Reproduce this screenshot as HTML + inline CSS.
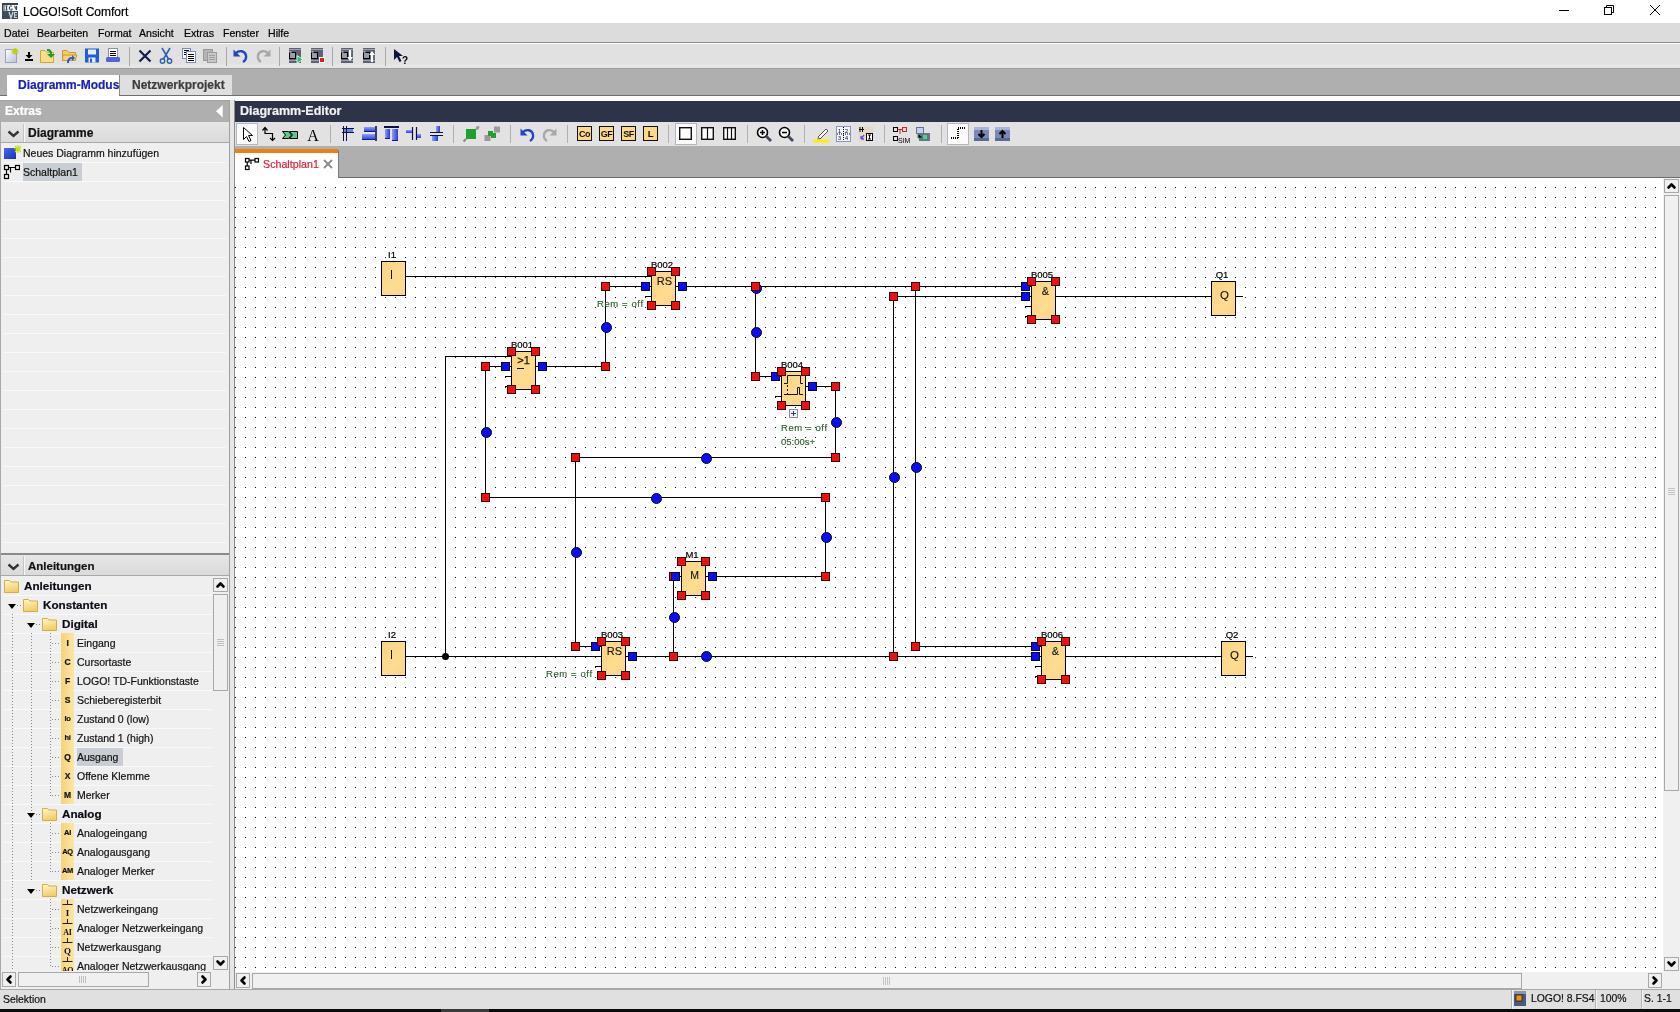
<!DOCTYPE html>
<html><head><meta charset="utf-8"><title>LOGO!Soft Comfort</title>
<style>
#root{position:absolute;left:0;top:0;width:1680px;height:1012px;overflow:hidden;will-change:transform}
html,body{margin:0;padding:0;width:1680px;height:1012px;overflow:hidden;background:#fff;position:relative}
body{font-family:"Liberation Sans",sans-serif;-webkit-font-smoothing:antialiased}
.t{position:absolute;white-space:nowrap;line-height:1;font-family:"Liberation Sans",sans-serif;-webkit-text-stroke:0.2px currentColor}
svg{overflow:hidden}
</style></head><body><div id="root">
<div style="position:absolute;left:0;top:0;width:1680px;height:23px;background:#fff"></div>
<svg style="position:absolute;left:2px;top:3px" width="16" height="16" viewBox="0 0 16 16">
<rect x="0" y="0" width="16" height="16" fill="#34414c"/>
<rect x="1" y="2" width="15" height="6" fill="#f4f6f8"/>
<path d="M2 2 V8 M4.5 3 V7 M3.5 3 H5.5 M3.5 7 H5.5 M8 3 H10 M7.5 3.5 V6.5 M8 7 H10 M10 5.5 V7 M12.5 3 L14.5 7 M14.5 3 V7" stroke="#34414c" stroke-width="1.1" fill="none"/>
<rect x="0" y="8" width="16" height="8" fill="#3e4c58"/>
<path d="M7 9 L9 15 L11 9" stroke="#c8d4de" stroke-width="1.3" fill="none"/>
<path d="M12 9.5 H15 M12 12 H15 M12 14.5 H15 M12.5 9 V15" stroke="#c8d4de" stroke-width="1.1"/>
</svg>
<div class="t" style="left:23px;top:6px;font-size:12px;color:#000">LOGO!Soft Comfort</div>
<svg style="position:absolute;left:1540px;top:0" width="140" height="23">
<line x1="19" y1="10.5" x2="29" y2="10.5" stroke="#000" stroke-width="1"/>
<rect x="64.5" y="7.5" width="7" height="7" fill="none" stroke="#000"/>
<path d="M66.5 7.5 V5.5 H73.5 V12.5 H71.5" fill="none" stroke="#000"/>
<path d="M110 5 L120 15 M120 5 L110 15" stroke="#000" stroke-width="1"/>
</svg>
<div style="position:absolute;left:0;top:23px;width:1680px;height:19px;background:#dcdcdc"></div>
<div style="position:absolute;left:0;top:42px;width:1680px;height:1px;background:#8c8c8c"></div>
<div style="position:absolute;left:0;top:43px;width:1680px;height:1px;background:#fdfdfd"></div>
<div class="t" style="left:4px;top:28px;font-size:10.6px;color:#000">Datei</div>
<div class="t" style="left:37px;top:28px;font-size:10.6px;color:#000">Bearbeiten</div>
<div class="t" style="left:98px;top:28px;font-size:10.6px;color:#000">Format</div>
<div class="t" style="left:139px;top:28px;font-size:10.6px;color:#000">Ansicht</div>
<div class="t" style="left:184px;top:28px;font-size:10.6px;color:#000">Extras</div>
<div class="t" style="left:223px;top:28px;font-size:10.6px;color:#000">Fenster</div>
<div class="t" style="left:268px;top:28px;font-size:10.6px;color:#000">Hilfe</div>
<div style="position:absolute;left:0;top:44px;width:1680px;height:24px;background:linear-gradient(#e1e1e1 0,#e1e1e1 20px,#e7e7e7 21px,#e5e5e5 24px)"></div>
<div style="position:absolute;left:0;top:68px;width:1680px;height:1px;background:#9c9c9c"></div>
<div style="position:absolute;left:129px;top:47px;width:1px;height:19px;background:#a8a8a8"></div>
<div style="position:absolute;left:226px;top:47px;width:1px;height:19px;background:#a8a8a8"></div>
<div style="position:absolute;left:279px;top:47px;width:1px;height:19px;background:#a8a8a8"></div>
<div style="position:absolute;left:332px;top:47px;width:1px;height:19px;background:#a8a8a8"></div>
<div style="position:absolute;left:385px;top:47px;width:1px;height:19px;background:#a8a8a8"></div>
<svg style="position:absolute;left:4px;top:47px" width="17" height="17" viewBox="0 0 17 17">
<defs><linearGradient id="nd" x1="0" y1="0" x2="1" y2="1"><stop offset="0" stop-color="#fff"/><stop offset="1" stop-color="#b8bde8"/></linearGradient></defs>
<rect x="1.5" y="2.5" width="11" height="13" fill="url(#nd)" stroke="#9aa0c8"/>
<path d="M11 1 V8 M7.5 4.5 H14.5 M8.5 2 L13.5 7 M13.5 2 L8.5 7" stroke="#b9d400" stroke-width="1.3"/>
</svg>
<svg style="position:absolute;left:22px;top:47px" width="14" height="17" viewBox="0 0 14 17">
<path d="M7 5 V11" stroke="#000" stroke-width="2"/><path d="M3.5 8 H10.5 L7 11.5 Z" fill="#000"/>
<rect x="3" y="12" width="8" height="2" fill="#000"/>
</svg>
<svg style="position:absolute;left:39px;top:47px" width="18" height="17" viewBox="0 0 18 17">
<path d="M1.5 3.5 H6 L8 5.5 H14.5 V15.5 H1.5 Z" fill="#f7df8a" stroke="#d2a43c"/>
<path d="M8 2 C12 2 13 4 13 7 L16 7 L12 11 L8 7 L11 7 C11 5 10 4 8 4 Z" fill="#1e9a2c"/>
</svg>
<svg style="position:absolute;left:61px;top:47px" width="18" height="18" viewBox="0 0 18 18">
<path d="M1.5 3.5 H6 L8 5.5 H14.5 V13.5 H1.5 Z" fill="#f2cf6a" stroke="#c99a2e"/>
<path d="M2 8 H16 L14 13.5 H1.5 Z" fill="#f6d57a" stroke="#c99a2e"/>
<path d="M6 16 C6 12 8 10 11 10 L11 8 L14 11 L11 14 L11 12 C9 12 8 13 8 16 Z" fill="#2f53d8"/>
</svg>
<svg style="position:absolute;left:84px;top:47px" width="16" height="17" viewBox="0 0 16 17">
<rect x="1" y="1.5" width="14" height="14" fill="#1f5fd6"/>
<rect x="4" y="2.5" width="8" height="5" fill="#e8eef8"/>
<rect x="4.5" y="10.5" width="7" height="5" fill="#e8eef8"/>
<rect x="6" y="11.5" width="2" height="4" fill="#1f5fd6"/>
</svg>
<svg style="position:absolute;left:105px;top:47px" width="16" height="17" viewBox="0 0 16 17">
<rect x="3.5" y="1.5" width="9" height="9" fill="#fff" stroke="#8b90b0"/>
<path d="M5 4.5 H11 M5 6.5 H11 M5 8.5 H11" stroke="#000"/>
<rect x="1" y="10" width="14" height="5" rx="1.5" fill="#5563d8"/>
</svg>
<svg style="position:absolute;left:137px;top:48px" width="16" height="16" viewBox="0 0 16 16">
<path d="M2.5 2.5 L13.5 13.5 M13.5 2.5 L2.5 13.5" stroke="#141c4c" stroke-width="2.2"/>
</svg>
<svg style="position:absolute;left:158px;top:47px" width="16" height="17" viewBox="0 0 16 17">
<path d="M4 1 L10.5 12 M12 1 L5.5 12" stroke="#2f5fb8" stroke-width="1.6"/>
<circle cx="4.5" cy="14" r="2.2" fill="none" stroke="#2f5fb8" stroke-width="1.4"/>
<circle cx="11.5" cy="14" r="2.2" fill="none" stroke="#2f5fb8" stroke-width="1.4"/>
</svg>
<svg style="position:absolute;left:181px;top:47px" width="16" height="17" viewBox="0 0 16 17">
<rect x="1.5" y="1.5" width="8" height="10" fill="#fff" stroke="#7b88c8"/>
<rect x="5.5" y="4.5" width="9" height="11" fill="#fff" stroke="#7b88c8"/>
<path d="M3 3.5 H8 M3 5.5 H5 M3 7.5 H5 M7 7.5 H13 M7 9.5 H13 M7 11.5 H13 M7 13.5 H13" stroke="#000"/>
</svg>
<svg style="position:absolute;left:202px;top:47px" width="16" height="17" viewBox="0 0 16 17">
<rect x="1.5" y="2.5" width="9" height="11" fill="#b4b4b4" stroke="#999"/>
<rect x="5.5" y="5.5" width="9" height="10" fill="#c8c8c8" stroke="#9c9c9c"/>
<path d="M7 8.5 H13 M7 10.5 H13 M7 12.5 H13" stroke="#a0a0a0"/>
</svg>
<svg style="position:absolute;left:232px;top:47px" width="17" height="17" viewBox="0 0 17 17">
<path d="M4 6 C7 3 13 3.5 14 8.5 C14.5 11.5 12.5 14 11 15" fill="none" stroke="#2344c8" stroke-width="2.4"/>
<path d="M1.5 2.5 V9.5 H8.5 Z" fill="#2344c8"/>
</svg>
<svg style="position:absolute;left:255px;top:47px" width="17" height="17" viewBox="0 0 17 17">
<path d="M13 6 C10 3 4 3.5 3 8.5 C2.5 11.5 4.5 14 6 15" fill="none" stroke="#a8a8a8" stroke-width="2.4"/>
<path d="M15.5 2.5 V9.5 H8.5 Z" fill="#a8a8a8"/>
</svg>
<svg style="position:absolute;left:288px;top:47px" width="16" height="17" viewBox="0 0 16 17">
<rect x="1" y="1" width="12" height="15" fill="#5e6272"/>
<rect x="1" y="2" width="12" height="1" fill="#9aa0b4"/>
<rect x="1" y="13" width="12" height="1" fill="#9aa0b4"/>
<rect x="1.5" y="5.5" width="6" height="6" fill="#9a9ca8" stroke="#000"/>
<rect x="1.5" y="4.5" width="2" height="1" fill="#fff"/>
<path d="M9 8.5 L15 12.5 L9 16.5 Z" fill="#28c070" stroke="#fff" stroke-width="0.8"/>
</svg>
<svg style="position:absolute;left:310px;top:47px" width="16" height="17" viewBox="0 0 16 17">
<rect x="1" y="1" width="12" height="15" fill="#5e6272"/>
<rect x="1" y="2" width="12" height="1" fill="#9aa0b4"/>
<rect x="1" y="13" width="12" height="1" fill="#9aa0b4"/>
<rect x="1.5" y="5.5" width="6" height="6" fill="#9a9ca8" stroke="#000"/>
<rect x="1.5" y="4.5" width="2" height="1" fill="#fff"/>
<rect x="9.5" y="10.5" width="5" height="5" fill="#e81818" stroke="#fff"/>
</svg>
<svg style="position:absolute;left:340px;top:47px" width="16" height="17" viewBox="0 0 16 17">
<rect x="1" y="1" width="12" height="15" fill="#5e6272"/>
<rect x="1" y="2" width="12" height="1" fill="#9aa0b4"/>
<rect x="1" y="13" width="12" height="1" fill="#9aa0b4"/>
<rect x="1.5" y="5.5" width="6" height="6" fill="#9a9ca8" stroke="#000"/>
<rect x="1.5" y="4.5" width="2" height="1" fill="#fff"/>
<path d="M10 3 V12" stroke="#fff" stroke-width="2.2"/><path d="M7 10 H13 L10 14 Z" fill="#fff"/>
</svg>
<svg style="position:absolute;left:362px;top:47px" width="16" height="17" viewBox="0 0 16 17">
<rect x="1" y="1" width="12" height="15" fill="#5e6272"/>
<rect x="1" y="2" width="12" height="1" fill="#9aa0b4"/>
<rect x="1" y="13" width="12" height="1" fill="#9aa0b4"/>
<rect x="1.5" y="5.5" width="6" height="6" fill="#9a9ca8" stroke="#000"/>
<rect x="1.5" y="4.5" width="2" height="1" fill="#fff"/>
<path d="M10 15 V6" stroke="#fff" stroke-width="2.2"/><path d="M7 8 H13 L10 4 Z" fill="#fff"/>
</svg>
<svg style="position:absolute;left:393px;top:48px" width="16" height="16" viewBox="0 0 16 16">
<path d="M1 1 L1 12 L4 9 L6.5 14 L8.5 13 L6 8 L10 8 Z" fill="#0c1440"/>
<text x="9" y="15.5" font-family="Liberation Sans" font-weight="bold" font-size="10" fill="#000">?</text>
</svg>
<div style="position:absolute;left:0;top:69px;width:1680px;height:26px;background:#afafaf"></div>
<div style="position:absolute;left:0;top:95px;width:1680px;height:1px;background:#6e6e6e"></div>
<div style="position:absolute;left:0;top:96px;width:1680px;height:4px;background:#fff"></div>
<div style="position:absolute;left:7px;top:75px;width:112px;height:21px;background:#fff"></div>
<div class="t" style="left:18px;top:79px;font-size:12px;font-weight:bold;color:#1c22b8">Diagramm-Modus</div>
<div style="position:absolute;left:120px;top:75px;width:112px;height:20px;background:#dfdfdf"></div>
<div style="position:absolute;left:119px;top:75px;width:1px;height:20px;background:#8e8e8e"></div>
<div class="t" style="left:132px;top:79px;font-size:12px;font-weight:bold;color:#3c3c3c">Netzwerkprojekt</div>
<div style="position:absolute;left:0;top:100px;width:230px;height:889px;background:#efefef"></div>
<div style="position:absolute;left:0;top:100px;width:1px;height:889px;background:#a8a8a8"></div>
<div style="position:absolute;left:229px;top:100px;width:1px;height:889px;background:#a0a0a0"></div>
<div style="position:absolute;left:230px;top:100px;width:4px;height:889px;background:#e6e6e6"></div>
<div style="position:absolute;left:0;top:100px;width:229px;height:22px;background:#afafaf;border-top:1px solid #a2a2a2;box-sizing:border-box"></div>
<div class="t" style="left:5px;top:105px;font-size:12px;font-weight:bold;color:#fff">Extras</div>
<svg style="position:absolute;left:215px;top:104px" width="9" height="15"><path d="M1 7.3 L7.7 1 L7.7 13.6 Z" fill="#fff"/></svg>
<div style="position:absolute;left:1px;top:122px;width:228px;height:21px;background:linear-gradient(#e6e6e6,#dadada);border-bottom:1px solid #a8a8a8;box-sizing:border-box"></div>
<div style="position:absolute;left:23px;top:124px;width:1px;height:18px;background:#c4c4c4"></div>
<div style="position:absolute;left:24px;top:124px;width:1px;height:18px;background:#f8f8f8"></div>
<svg style="position:absolute;left:7px;top:130px" width="13" height="8" viewBox="0 0 13 8"><path d="M1.5 1.5 L6.5 6 L11.5 1.5" fill="none" stroke="#333" stroke-width="2.4"/></svg>
<div class="t" style="left:28px;top:127px;font-size:12px;font-weight:bold;color:#111">Diagramme</div>
<div style="position:absolute;left:4px;top:162px;width:222px;height:1px;background:#f9f9f9"></div>
<div style="position:absolute;left:4px;top:181px;width:222px;height:1px;background:#f9f9f9"></div>
<div style="position:absolute;left:4px;top:200px;width:222px;height:1px;background:#f9f9f9"></div>
<div style="position:absolute;left:4px;top:219px;width:222px;height:1px;background:#f9f9f9"></div>
<div style="position:absolute;left:4px;top:238px;width:222px;height:1px;background:#f9f9f9"></div>
<div style="position:absolute;left:4px;top:257px;width:222px;height:1px;background:#f9f9f9"></div>
<div style="position:absolute;left:4px;top:276px;width:222px;height:1px;background:#f9f9f9"></div>
<div style="position:absolute;left:4px;top:295px;width:222px;height:1px;background:#f9f9f9"></div>
<div style="position:absolute;left:4px;top:314px;width:222px;height:1px;background:#f9f9f9"></div>
<div style="position:absolute;left:4px;top:333px;width:222px;height:1px;background:#f9f9f9"></div>
<div style="position:absolute;left:4px;top:352px;width:222px;height:1px;background:#f9f9f9"></div>
<div style="position:absolute;left:4px;top:371px;width:222px;height:1px;background:#f9f9f9"></div>
<div style="position:absolute;left:4px;top:390px;width:222px;height:1px;background:#f9f9f9"></div>
<div style="position:absolute;left:4px;top:409px;width:222px;height:1px;background:#f9f9f9"></div>
<div style="position:absolute;left:4px;top:428px;width:222px;height:1px;background:#f9f9f9"></div>
<div style="position:absolute;left:4px;top:447px;width:222px;height:1px;background:#f9f9f9"></div>
<div style="position:absolute;left:4px;top:466px;width:222px;height:1px;background:#f9f9f9"></div>
<div style="position:absolute;left:4px;top:485px;width:222px;height:1px;background:#f9f9f9"></div>
<div style="position:absolute;left:4px;top:504px;width:222px;height:1px;background:#f9f9f9"></div>
<div style="position:absolute;left:4px;top:523px;width:222px;height:1px;background:#f9f9f9"></div>
<div style="position:absolute;left:4px;top:542px;width:222px;height:1px;background:#f9f9f9"></div>
<svg style="position:absolute;left:3px;top:144px" width="18" height="17" viewBox="0 0 18 17">
<defs><linearGradient id="ndi" x1="0" y1="0" x2="1" y2="1"><stop offset="0" stop-color="#4a6ae8"/><stop offset="1" stop-color="#1a2fc0"/></linearGradient></defs>
<rect x="1" y="4" width="12" height="11" fill="url(#ndi)"/>
<path d="M15 1 V9 M11 5 H19 M12 2 L18 8 M18 2 L12 8" stroke="#c4e000" stroke-width="1.2"/>
</svg>
<div class="t" style="left:23px;top:148px;font-size:10.5px;color:#111">Neues Diagramm hinzufügen</div>
<div style="position:absolute;left:23px;top:163px;width:59px;height:18px;background:#c9cdd4"></div>
<svg style="position:absolute;left:3px;top:164px" width="17" height="16" viewBox="0 0 17 16">
<rect x="1.5" y="1.5" width="4" height="4" fill="none" stroke="#000" stroke-width="1.2"/>
<rect x="1.5" y="10.5" width="4" height="4" fill="none" stroke="#000" stroke-width="1.2"/>
<rect x="12.5" y="1.5" width="4" height="4" fill="none" stroke="#000" stroke-width="1.2"/>
<path d="M5.5 3.5 H12.5 M3.5 5.5 V10.5 M7.5 3.5 V8.5" stroke="#000" stroke-width="1.2"/>
</svg>
<div class="t" style="left:23px;top:167px;font-size:10.5px;color:#111">Schaltplan1</div>
<div style="position:absolute;left:1px;top:553px;width:228px;height:2px;background:#8a8a8a"></div>
<div style="position:absolute;left:1px;top:555px;width:228px;height:21px;background:linear-gradient(#e6e6e6,#dadada);border-bottom:1px solid #a8a8a8;box-sizing:border-box"></div>
<div style="position:absolute;left:23px;top:556px;width:1px;height:19px;background:#c4c4c4"></div>
<div style="position:absolute;left:24px;top:556px;width:1px;height:19px;background:#f8f8f8"></div>
<svg style="position:absolute;left:7px;top:563px" width="13" height="8" viewBox="0 0 13 8"><path d="M1.5 1.5 L6.5 6 L11.5 1.5" fill="none" stroke="#333" stroke-width="2.4"/></svg>
<div class="t" style="left:28px;top:561px;font-size:11.5px;font-weight:bold;color:#111">Anleitungen</div>
<div style="position:absolute;left:1px;top:576px;width:211px;height:396px;overflow:hidden">
<div style="position:absolute;left:3px;top:19px;width:208px;height:1px;background:#f9f9f9"></div>
<div style="position:absolute;left:3px;top:38px;width:208px;height:1px;background:#f9f9f9"></div>
<div style="position:absolute;left:3px;top:57px;width:208px;height:1px;background:#f9f9f9"></div>
<div style="position:absolute;left:3px;top:76px;width:208px;height:1px;background:#f9f9f9"></div>
<div style="position:absolute;left:3px;top:95px;width:208px;height:1px;background:#f9f9f9"></div>
<div style="position:absolute;left:3px;top:114px;width:208px;height:1px;background:#f9f9f9"></div>
<div style="position:absolute;left:3px;top:133px;width:208px;height:1px;background:#f9f9f9"></div>
<div style="position:absolute;left:3px;top:152px;width:208px;height:1px;background:#f9f9f9"></div>
<div style="position:absolute;left:3px;top:171px;width:208px;height:1px;background:#f9f9f9"></div>
<div style="position:absolute;left:3px;top:190px;width:208px;height:1px;background:#f9f9f9"></div>
<div style="position:absolute;left:3px;top:209px;width:208px;height:1px;background:#f9f9f9"></div>
<div style="position:absolute;left:3px;top:228px;width:208px;height:1px;background:#f9f9f9"></div>
<div style="position:absolute;left:3px;top:247px;width:208px;height:1px;background:#f9f9f9"></div>
<div style="position:absolute;left:3px;top:266px;width:208px;height:1px;background:#f9f9f9"></div>
<div style="position:absolute;left:3px;top:285px;width:208px;height:1px;background:#f9f9f9"></div>
<div style="position:absolute;left:3px;top:304px;width:208px;height:1px;background:#f9f9f9"></div>
<div style="position:absolute;left:3px;top:323px;width:208px;height:1px;background:#f9f9f9"></div>
<div style="position:absolute;left:3px;top:342px;width:208px;height:1px;background:#f9f9f9"></div>
<div style="position:absolute;left:3px;top:361px;width:208px;height:1px;background:#f9f9f9"></div>
<div style="position:absolute;left:3px;top:380px;width:208px;height:1px;background:#f9f9f9"></div>
<div style="position:absolute;left:3px;top:399px;width:208px;height:1px;background:#f9f9f9"></div>
<div style="position:absolute;left:11px;top:38px;width:1px;height:358px;background:repeating-linear-gradient(#8a8a8a 0 1px,transparent 1px 3px)"></div>
<div style="position:absolute;left:30px;top:57px;width:1px;height:247px;background:repeating-linear-gradient(#8a8a8a 0 1px,transparent 1px 3px)"></div>
<div style="position:absolute;left:49px;top:57px;width:1px;height:163px;background:repeating-linear-gradient(#8a8a8a 0 1px,transparent 1px 3px)"></div>
<div style="position:absolute;left:49px;top:247px;width:1px;height:49px;background:repeating-linear-gradient(#8a8a8a 0 1px,transparent 1px 3px)"></div>
<div style="position:absolute;left:49px;top:323px;width:1px;height:69px;background:repeating-linear-gradient(#8a8a8a 0 1px,transparent 1px 3px)"></div>
<svg style="position:absolute;left:3px;top:3px" width="16" height="14" viewBox="0 0 16 14">
<defs><linearGradient id="fg3_3" x1="0" y1="0" x2="0.3" y2="1"><stop offset="0" stop-color="#fff6cc"/><stop offset="1" stop-color="#f0cf6a"/></linearGradient></defs>
<path d="M0.5 1.5 H5.5 L7 3 H14.5 V13.5 H0.5 Z" fill="url(#fg3_3)" stroke="#d4ad48"/>
</svg>
<div class="t" style="left:23px;top:3.5px;font-size:11.7px;font-weight:bold;color:#0a0a14">Anleitungen</div>
<svg style="position:absolute;left:7px;top:28px" width="9" height="6"><path d="M0 0 H8 L4 5 Z" fill="#000"/></svg>
<div style="position:absolute;left:16px;top:29px;width:6px;height:1px;background:repeating-linear-gradient(90deg,#8a8a8a 0 1px,transparent 1px 3px)"></div>
<svg style="position:absolute;left:22px;top:22px" width="16" height="14" viewBox="0 0 16 14">
<defs><linearGradient id="fg22_22" x1="0" y1="0" x2="0.3" y2="1"><stop offset="0" stop-color="#fff6cc"/><stop offset="1" stop-color="#f0cf6a"/></linearGradient></defs>
<path d="M0.5 1.5 H5.5 L7 3 H14.5 V13.5 H0.5 Z" fill="url(#fg22_22)" stroke="#d4ad48"/>
</svg>
<div class="t" style="left:42px;top:22.5px;font-size:11.7px;font-weight:bold;color:#0a0a14">Konstanten</div>
<svg style="position:absolute;left:26px;top:47px" width="9" height="6"><path d="M0 0 H8 L4 5 Z" fill="#000"/></svg>
<div style="position:absolute;left:35px;top:48px;width:6px;height:1px;background:repeating-linear-gradient(90deg,#8a8a8a 0 1px,transparent 1px 3px)"></div>
<svg style="position:absolute;left:41px;top:41px" width="16" height="14" viewBox="0 0 16 14">
<defs><linearGradient id="fg41_41" x1="0" y1="0" x2="0.3" y2="1"><stop offset="0" stop-color="#fff6cc"/><stop offset="1" stop-color="#f0cf6a"/></linearGradient></defs>
<path d="M0.5 1.5 H5.5 L7 3 H14.5 V13.5 H0.5 Z" fill="url(#fg41_41)" stroke="#d4ad48"/>
</svg>
<div class="t" style="left:61px;top:41.5px;font-size:11.7px;font-weight:bold;color:#0a0a14">Digital</div>
<div style="position:absolute;left:51px;top:67px;width:8px;height:1px;background:repeating-linear-gradient(90deg,#8a8a8a 0 1px,transparent 1px 3px)"></div>
<div style="position:absolute;left:60px;top:57px;width:13px;height:19px;background:linear-gradient(90deg,#f6d27a,#fbe6a8)"></div>
<div class="t" style="left:60px;top:63px;width:13px;text-align:center;font-size:8.5px;font-weight:bold;color:#111;letter-spacing:-0.3px">I</div>
<div class="t" style="left:76px;top:61.5px;font-size:10.5px;color:#111">Eingang</div>
<div style="position:absolute;left:51px;top:86px;width:8px;height:1px;background:repeating-linear-gradient(90deg,#8a8a8a 0 1px,transparent 1px 3px)"></div>
<div style="position:absolute;left:60px;top:76px;width:13px;height:19px;background:linear-gradient(90deg,#f6d27a,#fbe6a8)"></div>
<div class="t" style="left:60px;top:82px;width:13px;text-align:center;font-size:8.5px;font-weight:bold;color:#111;letter-spacing:-0.3px">C</div>
<div class="t" style="left:76px;top:80.5px;font-size:10.5px;color:#111">Cursortaste</div>
<div style="position:absolute;left:51px;top:105px;width:8px;height:1px;background:repeating-linear-gradient(90deg,#8a8a8a 0 1px,transparent 1px 3px)"></div>
<div style="position:absolute;left:60px;top:95px;width:13px;height:19px;background:linear-gradient(90deg,#f6d27a,#fbe6a8)"></div>
<div class="t" style="left:60px;top:101px;width:13px;text-align:center;font-size:8.5px;font-weight:bold;color:#111;letter-spacing:-0.3px">F</div>
<div class="t" style="left:76px;top:99.5px;font-size:10.5px;color:#111">LOGO! TD-Funktionstaste</div>
<div style="position:absolute;left:51px;top:124px;width:8px;height:1px;background:repeating-linear-gradient(90deg,#8a8a8a 0 1px,transparent 1px 3px)"></div>
<div style="position:absolute;left:60px;top:114px;width:13px;height:19px;background:linear-gradient(90deg,#f6d27a,#fbe6a8)"></div>
<div class="t" style="left:60px;top:120px;width:13px;text-align:center;font-size:8.5px;font-weight:bold;color:#111;letter-spacing:-0.3px">S</div>
<div class="t" style="left:76px;top:118.5px;font-size:10.5px;color:#111">Schieberegisterbit</div>
<div style="position:absolute;left:51px;top:143px;width:8px;height:1px;background:repeating-linear-gradient(90deg,#8a8a8a 0 1px,transparent 1px 3px)"></div>
<div style="position:absolute;left:60px;top:133px;width:13px;height:19px;background:linear-gradient(90deg,#f6d27a,#fbe6a8)"></div>
<div class="t" style="left:60px;top:139px;width:13px;text-align:center;font-size:7.5px;font-weight:bold;color:#111;letter-spacing:-0.3px">lo</div>
<div class="t" style="left:76px;top:137.5px;font-size:10.5px;color:#111">Zustand 0 (low)</div>
<div style="position:absolute;left:51px;top:162px;width:8px;height:1px;background:repeating-linear-gradient(90deg,#8a8a8a 0 1px,transparent 1px 3px)"></div>
<div style="position:absolute;left:60px;top:152px;width:13px;height:19px;background:linear-gradient(90deg,#f6d27a,#fbe6a8)"></div>
<div class="t" style="left:60px;top:158px;width:13px;text-align:center;font-size:7.5px;font-weight:bold;color:#111;letter-spacing:-0.3px">hi</div>
<div class="t" style="left:76px;top:156.5px;font-size:10.5px;color:#111">Zustand 1 (high)</div>
<div style="position:absolute;left:51px;top:181px;width:8px;height:1px;background:repeating-linear-gradient(90deg,#8a8a8a 0 1px,transparent 1px 3px)"></div>
<div style="position:absolute;left:60px;top:171px;width:13px;height:19px;background:linear-gradient(90deg,#f6d27a,#fbe6a8)"></div>
<div class="t" style="left:60px;top:177px;width:13px;text-align:center;font-size:8.5px;font-weight:bold;color:#111;letter-spacing:-0.3px">Q</div>
<div style="position:absolute;left:76px;top:172px;width:46px;height:18px;background:#c9cdd4"></div>
<div class="t" style="left:76px;top:175.5px;font-size:10.5px;color:#111">Ausgang</div>
<div style="position:absolute;left:51px;top:200px;width:8px;height:1px;background:repeating-linear-gradient(90deg,#8a8a8a 0 1px,transparent 1px 3px)"></div>
<div style="position:absolute;left:60px;top:190px;width:13px;height:19px;background:linear-gradient(90deg,#f6d27a,#fbe6a8)"></div>
<div class="t" style="left:60px;top:196px;width:13px;text-align:center;font-size:8.5px;font-weight:bold;color:#111;letter-spacing:-0.3px">X</div>
<div class="t" style="left:76px;top:194.5px;font-size:10.5px;color:#111">Offene Klemme</div>
<div style="position:absolute;left:51px;top:219px;width:8px;height:1px;background:repeating-linear-gradient(90deg,#8a8a8a 0 1px,transparent 1px 3px)"></div>
<div style="position:absolute;left:60px;top:209px;width:13px;height:19px;background:linear-gradient(90deg,#f6d27a,#fbe6a8)"></div>
<div class="t" style="left:60px;top:215px;width:13px;text-align:center;font-size:8.5px;font-weight:bold;color:#111;letter-spacing:-0.3px">M</div>
<div class="t" style="left:76px;top:213.5px;font-size:10.5px;color:#111">Merker</div>
<svg style="position:absolute;left:26px;top:237px" width="9" height="6"><path d="M0 0 H8 L4 5 Z" fill="#000"/></svg>
<div style="position:absolute;left:35px;top:238px;width:6px;height:1px;background:repeating-linear-gradient(90deg,#8a8a8a 0 1px,transparent 1px 3px)"></div>
<svg style="position:absolute;left:41px;top:231px" width="16" height="14" viewBox="0 0 16 14">
<defs><linearGradient id="fg41_231" x1="0" y1="0" x2="0.3" y2="1"><stop offset="0" stop-color="#fff6cc"/><stop offset="1" stop-color="#f0cf6a"/></linearGradient></defs>
<path d="M0.5 1.5 H5.5 L7 3 H14.5 V13.5 H0.5 Z" fill="url(#fg41_231)" stroke="#d4ad48"/>
</svg>
<div class="t" style="left:61px;top:231.5px;font-size:11.7px;font-weight:bold;color:#0a0a14">Analog</div>
<div style="position:absolute;left:51px;top:257px;width:8px;height:1px;background:repeating-linear-gradient(90deg,#8a8a8a 0 1px,transparent 1px 3px)"></div>
<div style="position:absolute;left:60px;top:247px;width:13px;height:19px;background:linear-gradient(90deg,#f6d27a,#fbe6a8)"></div>
<div class="t" style="left:60px;top:253px;width:13px;text-align:center;font-size:7.5px;font-weight:bold;color:#111;letter-spacing:-0.3px">AI</div>
<div class="t" style="left:76px;top:251.5px;font-size:10.5px;color:#111">Analogeingang</div>
<div style="position:absolute;left:51px;top:276px;width:8px;height:1px;background:repeating-linear-gradient(90deg,#8a8a8a 0 1px,transparent 1px 3px)"></div>
<div style="position:absolute;left:60px;top:266px;width:13px;height:19px;background:linear-gradient(90deg,#f6d27a,#fbe6a8)"></div>
<div class="t" style="left:60px;top:272px;width:13px;text-align:center;font-size:7.5px;font-weight:bold;color:#111;letter-spacing:-0.3px">AQ</div>
<div class="t" style="left:76px;top:270.5px;font-size:10.5px;color:#111">Analogausgang</div>
<div style="position:absolute;left:51px;top:295px;width:8px;height:1px;background:repeating-linear-gradient(90deg,#8a8a8a 0 1px,transparent 1px 3px)"></div>
<div style="position:absolute;left:60px;top:285px;width:13px;height:19px;background:linear-gradient(90deg,#f6d27a,#fbe6a8)"></div>
<div class="t" style="left:60px;top:291px;width:13px;text-align:center;font-size:7.5px;font-weight:bold;color:#111;letter-spacing:-0.3px">AM</div>
<div class="t" style="left:76px;top:289.5px;font-size:10.5px;color:#111">Analoger Merker</div>
<svg style="position:absolute;left:26px;top:313px" width="9" height="6"><path d="M0 0 H8 L4 5 Z" fill="#000"/></svg>
<div style="position:absolute;left:35px;top:314px;width:6px;height:1px;background:repeating-linear-gradient(90deg,#8a8a8a 0 1px,transparent 1px 3px)"></div>
<svg style="position:absolute;left:41px;top:307px" width="16" height="14" viewBox="0 0 16 14">
<defs><linearGradient id="fg41_307" x1="0" y1="0" x2="0.3" y2="1"><stop offset="0" stop-color="#fff6cc"/><stop offset="1" stop-color="#f0cf6a"/></linearGradient></defs>
<path d="M0.5 1.5 H5.5 L7 3 H14.5 V13.5 H0.5 Z" fill="url(#fg41_307)" stroke="#d4ad48"/>
</svg>
<div class="t" style="left:61px;top:307.5px;font-size:11.7px;font-weight:bold;color:#0a0a14">Netzwerk</div>
<div style="position:absolute;left:51px;top:333px;width:8px;height:1px;background:repeating-linear-gradient(90deg,#8a8a8a 0 1px,transparent 1px 3px)"></div>
<div style="position:absolute;left:60px;top:323px;width:13px;height:19px;background:linear-gradient(90deg,#f6d27a,#fbe6a8)"></div>
<svg style="position:absolute;left:60px;top:323px" width="13" height="19"><path d="M1.5 5.5 H11.5" stroke="#222" stroke-width="1"/><path d="M6.5 1 V5" stroke="#222" stroke-width="1"/><text x="6.5" y="16.5" text-anchor="middle" font-family="Liberation Serif" font-weight="bold" font-size="9" fill="#111" letter-spacing="-0.2">I</text></svg>
<div class="t" style="left:76px;top:327.5px;font-size:10.5px;color:#111">Netzwerkeingang</div>
<div style="position:absolute;left:51px;top:352px;width:8px;height:1px;background:repeating-linear-gradient(90deg,#8a8a8a 0 1px,transparent 1px 3px)"></div>
<div style="position:absolute;left:60px;top:342px;width:13px;height:19px;background:linear-gradient(90deg,#f6d27a,#fbe6a8)"></div>
<svg style="position:absolute;left:60px;top:342px" width="13" height="19"><path d="M1.5 5.5 H11.5" stroke="#222" stroke-width="1"/><path d="M6.5 1 V5" stroke="#222" stroke-width="1"/><text x="6.5" y="16.5" text-anchor="middle" font-family="Liberation Serif" font-weight="bold" font-size="8" fill="#111" letter-spacing="-0.2">AI</text></svg>
<div class="t" style="left:76px;top:346.5px;font-size:10.5px;color:#111">Analoger Netzwerkeingang</div>
<div style="position:absolute;left:51px;top:371px;width:8px;height:1px;background:repeating-linear-gradient(90deg,#8a8a8a 0 1px,transparent 1px 3px)"></div>
<div style="position:absolute;left:60px;top:361px;width:13px;height:19px;background:linear-gradient(90deg,#f6d27a,#fbe6a8)"></div>
<svg style="position:absolute;left:60px;top:361px" width="13" height="19"><path d="M1.5 5.5 H11.5" stroke="#222" stroke-width="1"/><path d="M6.5 1 V5" stroke="#222" stroke-width="1"/><text x="6.5" y="16.5" text-anchor="middle" font-family="Liberation Serif" font-weight="bold" font-size="9" fill="#111" letter-spacing="-0.2">Q</text></svg>
<div class="t" style="left:76px;top:365.5px;font-size:10.5px;color:#111">Netzwerkausgang</div>
<div style="position:absolute;left:51px;top:390px;width:8px;height:1px;background:repeating-linear-gradient(90deg,#8a8a8a 0 1px,transparent 1px 3px)"></div>
<div style="position:absolute;left:60px;top:380px;width:13px;height:19px;background:linear-gradient(90deg,#f6d27a,#fbe6a8)"></div>
<svg style="position:absolute;left:60px;top:380px" width="13" height="19"><path d="M1.5 5.5 H11.5" stroke="#222" stroke-width="1"/><path d="M6.5 1 V5" stroke="#222" stroke-width="1"/><text x="6.5" y="16.5" text-anchor="middle" font-family="Liberation Serif" font-weight="bold" font-size="8" fill="#111" letter-spacing="-0.2">AQ</text></svg>
<div class="t" style="left:76px;top:384.5px;font-size:10.5px;color:#111">Analoger Netzwerkausgang</div>
</div>
<div style="position:absolute;left:212px;top:576px;width:17px;height:396px;background:#efefef"></div>
<svg style="position:absolute;left:213px;top:578px" width="15" height="14" viewBox="0 0 15 14">
<rect x="0.5" y="0.5" width="14" height="13" fill="#f0f0f0" stroke="#a8a8a8"/>
<path d="M4.5 8.5 L7.5 5.5 L10.5 8.5" fill="none" stroke="#000" stroke-width="2.6" stroke-linecap="round" stroke-linejoin="round"/>
</svg>
<svg style="position:absolute;left:213px;top:594px" width="15" height="97"><rect x="0.5" y="0.5" width="14" height="96" fill="#efefef" stroke="#a8a8a8"/>
<path d="M4 45.5 H11 M4 47.5 H11 M4 49.5 H11 M4 51.5 H11" stroke="#c0c0c0"/></svg>
<svg style="position:absolute;left:213px;top:956px" width="15" height="14" viewBox="0 0 15 14">
<rect x="0.5" y="0.5" width="14" height="13" fill="#f0f0f0" stroke="#a8a8a8"/>
<path d="M4.5 5.5 L7.5 8.5 L10.5 5.5" fill="none" stroke="#000" stroke-width="2.6" stroke-linecap="round" stroke-linejoin="round"/>
</svg>
<div style="position:absolute;left:1px;top:971px;width:228px;height:18px;background:#efefef"></div>
<svg style="position:absolute;left:2px;top:972px" width="14" height="15" viewBox="0 0 14 15">
<rect x="0.5" y="0.5" width="13" height="14" fill="#f0f0f0" stroke="#a8a8a8"/>
<path d="M8.5 4.5 L5.5 7.5 L8.5 10.5" fill="none" stroke="#000" stroke-width="2.6" stroke-linecap="round" stroke-linejoin="round"/>
</svg>
<svg style="position:absolute;left:18px;top:972px" width="131" height="15"><rect x="0.5" y="0.5" width="130" height="14" fill="#f0f0f0" stroke="#a8a8a8"/>
<path d="M61.5 4 V11 M63.5 4 V11 M65.5 4 V11 M67.5 4 V11" stroke="#c0c0c0"/></svg>
<svg style="position:absolute;left:197px;top:972px" width="14" height="15" viewBox="0 0 14 15">
<rect x="0.5" y="0.5" width="13" height="14" fill="#f0f0f0" stroke="#a8a8a8"/>
<path d="M5.5 4.5 L8.5 7.5 L5.5 10.5" fill="none" stroke="#000" stroke-width="2.6" stroke-linecap="round" stroke-linejoin="round"/>
</svg>
<div style="position:absolute;left:234px;top:100px;width:1px;height:889px;background:#8e8e8e"></div>
<div style="position:absolute;left:235px;top:101px;width:1445px;height:21px;background:#2d3349"></div>
<div class="t" style="left:240px;top:105px;font-size:12.5px;font-weight:bold;color:#f2f2f2">Diagramm-Editor</div>
<div style="position:absolute;left:235px;top:122px;width:1445px;height:24px;background:#e2e2e2"></div>
<div style="position:absolute;left:236px;top:123px;width:20px;height:20px;background:#fbfbfb;border:1px solid #b0b8c4"></div>
<div style="position:absolute;left:675px;top:123px;width:20px;height:20px;background:#fbfbfb;border:1px solid #b0b8c4"></div>
<div style="position:absolute;left:947px;top:123px;width:20px;height:20px;background:#fbfbfb;border:1px solid #b0b8c4"></div>
<div style="position:absolute;left:330px;top:125px;width:1px;height:18px;background:#b0b0b0"></div>
<div style="position:absolute;left:453px;top:125px;width:1px;height:18px;background:#b0b0b0"></div>
<div style="position:absolute;left:510px;top:125px;width:1px;height:18px;background:#b0b0b0"></div>
<div style="position:absolute;left:567px;top:125px;width:1px;height:18px;background:#b0b0b0"></div>
<div style="position:absolute;left:668px;top:125px;width:1px;height:18px;background:#b0b0b0"></div>
<div style="position:absolute;left:747px;top:125px;width:1px;height:18px;background:#b0b0b0"></div>
<div style="position:absolute;left:804px;top:125px;width:1px;height:18px;background:#b0b0b0"></div>
<div style="position:absolute;left:884px;top:125px;width:1px;height:18px;background:#b0b0b0"></div>
<div style="position:absolute;left:941px;top:125px;width:1px;height:18px;background:#b0b0b0"></div>
<svg style="position:absolute;left:240px;top:126px" width="16" height="17" viewBox="0 0 16 17"><path d="M3.5 1.5 L3.5 13.5 L6.5 10.5 L9 15.5 L11 14.5 L8.5 9.5 L12.5 9.5 Z" fill="#fff" stroke="#000"/></svg>
<svg style="position:absolute;left:261px;top:126px" width="16" height="17" viewBox="0 0 16 17"><path d="M1.5 4.5 L4 1.5 L6.5 4.5 M4 1.5 V7.5 H11.5 V14.5 M9 12 L11.5 14.5 L14 12" fill="none" stroke="#000" stroke-width="1.2"/></svg>
<svg style="position:absolute;left:282px;top:127px" width="17" height="16" viewBox="0 0 17 16"><path d="M0.5 4.5 H6.5 L9.5 8 L6.5 11.5 H0.5 L3.5 8 Z" fill="#5cc88c" stroke="#000"/><path d="M7.5 4.5 H15.5 V11.5 H7.5 L10.5 8 Z" fill="#5cc88c" stroke="#000"/></svg>
<svg style="position:absolute;left:305px;top:126px" width="16" height="17" viewBox="0 0 16 17"><text x="8" y="14.5" text-anchor="middle" font-family="Liberation Serif" font-size="16" fill="#000">A</text></svg>
<svg style="position:absolute;left:335px;top:122px" width="110" height="24" viewBox="335 122 110 24"><defs><linearGradient id="bl" x1="0" y1="0" x2="0" y2="1"><stop offset="0" stop-color="#8aa0ff"/><stop offset="1" stop-color="#2a3ad0"/></linearGradient><linearGradient id="blh" x1="0" y1="0" x2="1" y2="0"><stop offset="0" stop-color="#8aa0ff"/><stop offset="1" stop-color="#2a3ad0"/></linearGradient></defs><rect x="344" y="129" width="9" height="3" fill="#6f82f0"/><path d="M343.5 126 V141 M346.5 126 V141" stroke="#0c1040" stroke-width="1"/><path d="M342 128.5 H354 M342 132.5 H354" stroke="#0c1040" stroke-width="1"/><rect x="364" y="127" width="11" height="5" fill="url(#bl)"/><rect x="362" y="134" width="13" height="6" fill="url(#bl)"/><path d="M364 131.5 H375 M362 139.5 H375" stroke="#101a80"/><path d="M376 126 V141" stroke="#0c1040" stroke-width="1.6"/><rect x="384" y="126" width="15" height="2" fill="#0c1040"/><rect x="385" y="129" width="5" height="10" fill="url(#blh)"/><rect x="392" y="129" width="6" height="12" fill="url(#blh)"/><path d="M385 138.5 H390 M392 140.5 H398" stroke="#101a80"/><path d="M412.5 127 V140 M416.5 127 V140" stroke="#0c1040" stroke-width="1.2"/><rect x="406" y="130" width="6" height="3" fill="url(#bl)"/><rect x="417" y="134" width="4" height="4" fill="url(#bl)"/><path d="M430 132.5 H443 M430 135.5 H443" stroke="#0c1040" stroke-width="1.2"/><rect x="436" y="126" width="4" height="6" fill="url(#blh)"/><rect x="432" y="136" width="6" height="5" fill="url(#blh)"/></svg>
<svg style="position:absolute;left:463px;top:126px" width="17" height="17" viewBox="0 0 17 17"><rect x="3" y="3" width="10" height="10" fill="#20a030"/><path d="M13 3 L16 0.5 M3 13 L0.5 15.5" stroke="#888" stroke-width="2"/><rect x="13" y="0.5" width="3" height="3" fill="#999"/></svg>
<svg style="position:absolute;left:484px;top:126px" width="17" height="17" viewBox="0 0 17 17"><rect x="0.5" y="9" width="6" height="6" fill="#9a9a9a"/><rect x="10" y="0.5" width="6" height="6" fill="#9a9a9a"/><rect x="4" y="5" width="5" height="5" fill="#20a030"/><rect x="7" y="7" width="5" height="5" fill="#20a030"/></svg>
<svg style="position:absolute;left:519px;top:126px" width="17" height="17" viewBox="0 0 17 17"><path d="M4 6 C7 3 13 3.5 14 8.5 C14.5 11.5 12.5 14 11 15" fill="none" stroke="#2344c8" stroke-width="2.3"/><path d="M1.5 2.5 V9.5 H8.5 Z" fill="#2344c8"/></svg>
<svg style="position:absolute;left:541px;top:126px" width="17" height="17" viewBox="0 0 17 17"><path d="M13 6 C10 3 4 3.5 3 8.5 C2.5 11.5 4.5 14 6 15" fill="none" stroke="#a8a8a8" stroke-width="2.3"/><path d="M15.5 2.5 V9.5 H8.5 Z" fill="#a8a8a8"/></svg>
<svg style="position:absolute;left:577px;top:126px" width="15" height="15" viewBox="0 0 15 15"><rect x="0.5" y="0.5" width="14" height="14" fill="#fcd98a" stroke="#111"/><text x="7.5" y="11" text-anchor="middle" font-family="Liberation Sans" font-weight="bold" font-size="9" fill="#111" letter-spacing="-0.4">Co</text></svg>
<svg style="position:absolute;left:599px;top:126px" width="15" height="15" viewBox="0 0 15 15"><rect x="0.5" y="0.5" width="14" height="14" fill="#fcd98a" stroke="#111"/><text x="7.5" y="11" text-anchor="middle" font-family="Liberation Sans" font-weight="bold" font-size="9" fill="#111" letter-spacing="-0.4">GF</text></svg>
<svg style="position:absolute;left:621px;top:126px" width="15" height="15" viewBox="0 0 15 15"><rect x="0.5" y="0.5" width="14" height="14" fill="#fcd98a" stroke="#111"/><text x="7.5" y="11" text-anchor="middle" font-family="Liberation Sans" font-weight="bold" font-size="9" fill="#111" letter-spacing="-0.4">SF</text></svg>
<svg style="position:absolute;left:643px;top:126px" width="15" height="15" viewBox="0 0 15 15"><rect x="0.5" y="0.5" width="14" height="14" fill="#fcd98a" stroke="#111"/><text x="7.5" y="11" text-anchor="middle" font-family="Liberation Sans" font-weight="bold" font-size="9.5" fill="#111" letter-spacing="-0.4">L</text></svg>
<svg style="position:absolute;left:679px;top:127px" width="14" height="14" viewBox="0 0 14 14"><rect x="0.7" y="0.7" width="11.6" height="11.6" fill="#fff" stroke="#111" stroke-width="1.4"/></svg>
<svg style="position:absolute;left:701px;top:127px" width="14" height="14" viewBox="0 0 14 14"><rect x="0.7" y="0.7" width="11.6" height="11.6" fill="#fff" stroke="#111" stroke-width="1.4"/><path d="M6.5 0.5 V12.5" stroke="#111" stroke-width="1.2"/></svg>
<svg style="position:absolute;left:723px;top:127px" width="14" height="14" viewBox="0 0 14 14"><rect x="0.7" y="0.7" width="11.6" height="11.6" fill="#fff" stroke="#111" stroke-width="1.4"/><path d="M4.5 0.5 V12.5 M8.5 0.5 V12.5" stroke="#111" stroke-width="1.2"/></svg>
<svg style="position:absolute;left:756px;top:126px" width="17" height="17" viewBox="0 0 17 17"><circle cx="6.5" cy="6.5" r="5" fill="#fff" stroke="#000" stroke-width="1.6"/><path d="M4 6.5 H9 M6.5 4 V9" stroke="#000" stroke-width="1.6"/><path d="M10 10 L15 15" stroke="#3c4a60" stroke-width="2.8"/></svg>
<svg style="position:absolute;left:778px;top:126px" width="17" height="17" viewBox="0 0 17 17"><circle cx="6.5" cy="6.5" r="5" fill="#fff" stroke="#000" stroke-width="1.6"/><path d="M4 6.5 H9" stroke="#000" stroke-width="1.6"/><path d="M10 10 L15 15" stroke="#3c4a60" stroke-width="2.8"/></svg>
<svg style="position:absolute;left:813px;top:126px" width="17" height="17" viewBox="0 0 17 17"><path d="M5 11 L13 3 L15 5 L7 13 Z" fill="#fff" stroke="#555"/><path d="M5 11 L4 14 L7 13" fill="#888"/><rect x="0.5" y="13.5" width="16" height="3" fill="#ffef00"/></svg>
<svg style="position:absolute;left:836px;top:126px" width="15" height="16" viewBox="0 0 15 16"><rect x="0.5" y="0.5" width="14" height="15" fill="#f4f6ff" stroke="#8a94c0"/><path d="M7.5 1 V15 M1 8 H14" stroke="#000" stroke-dasharray="1 1"/><text x="2" y="7" font-family="Liberation Sans" font-size="5.5" fill="#000">1</text><text x="9" y="7" font-family="Liberation Sans" font-size="5.5" fill="#000">2</text><text x="2" y="14" font-family="Liberation Sans" font-size="5.5" fill="#000">3</text><text x="9" y="14" font-family="Liberation Sans" font-size="5.5" fill="#000">4</text></svg>
<svg style="position:absolute;left:858px;top:126px" width="16" height="16" viewBox="0 0 16 16"><rect x="0.5" y="0.5" width="15" height="15" fill="#e6d8c8"/><path d="M2 1 V6 M4.5 1 V6 M1 3.5 H6" stroke="#000"/><path d="M3 13 L6 9 M3 13 V10 M3 13 H6" stroke="#5a50e0" stroke-width="1.3"/><rect x="8.5" y="7.5" width="6" height="7" fill="#fff" stroke="#000"/><path d="M10 9 H13 M11.5 9 V13 M10 13 H13" stroke="#000"/></svg>
<svg style="position:absolute;left:892px;top:126px" width="18" height="17" viewBox="0 0 18 17"><rect x="1.5" y="1.5" width="4" height="4" fill="none" stroke="#000"/><rect x="10.5" y="1.5" width="4" height="4" fill="none" stroke="#e02020"/><path d="M5.5 3.5 H10.5 M8 3.5 V8" stroke="#e02020"/><rect x="1.5" y="10.5" width="4" height="4" fill="none" stroke="#000"/><text x="6" y="16.5" font-family="Liberation Sans" font-size="7" fill="#000">SIM</text></svg>
<svg style="position:absolute;left:915px;top:126px" width="16" height="17" viewBox="0 0 16 17"><rect x="1.5" y="1.5" width="7" height="6" fill="#c8d0e8" stroke="#6070a0"/><rect x="4" y="7" width="11" height="8" fill="#6c7184"/><rect x="8" y="9" width="4" height="4" fill="#30e090"/><path d="M3 8 V12 H8" stroke="#20a060"/></svg>
<svg style="position:absolute;left:950px;top:126px" width="17" height="17" viewBox="0 0 17 17"><path d="M1 12 H8 M8 12 V2 M8 2 H16" stroke="#000" stroke-width="2" stroke-dasharray="1 1"/></svg>
<svg style="position:absolute;left:974px;top:126px" width="15" height="17" viewBox="0 0 15 17"><rect x="0" y="1" width="15" height="14" fill="#7a8ab8"/><rect x="0" y="1" width="15" height="3" fill="#a8b4d8"/><rect x="0" y="12" width="15" height="3" fill="#5a6a98"/><path d="M7.5 4 V11 M4.5 8 L7.5 11 L10.5 8" stroke="#000" stroke-width="2" fill="none"/></svg>
<svg style="position:absolute;left:995px;top:126px" width="15" height="17" viewBox="0 0 15 17"><rect x="0" y="1" width="15" height="14" fill="#7a8ab8"/><rect x="0" y="1" width="15" height="3" fill="#a8b4d8"/><rect x="0" y="12" width="15" height="3" fill="#5a6a98"/><path d="M7.5 12 V5 M4.5 8 L7.5 5 L10.5 8" stroke="#000" stroke-width="2" fill="none"/></svg>
<div style="position:absolute;left:235px;top:146px;width:1445px;height:31px;background:#afafaf"></div>
<div style="position:absolute;left:338px;top:177px;width:1342px;height:1px;background:#6c6c6c"></div>
<div style="position:absolute;left:338px;top:150px;width:1px;height:28px;background:#7a7a7a"></div>
<div style="position:absolute;left:235px;top:149px;width:103px;height:4px;background:#f07e16"></div>
<div style="position:absolute;left:235px;top:153px;width:103px;height:24px;background:#fff"></div>
<svg style="position:absolute;left:244px;top:157px" width="16" height="14" viewBox="0 0 16 14"><rect x="1.5" y="1.5" width="3.5" height="3.5" fill="none" stroke="#000" stroke-width="1.2"/><rect x="1.5" y="9" width="3.5" height="3.5" fill="none" stroke="#000" stroke-width="1.2"/><rect x="11" y="1.5" width="3.5" height="3.5" fill="none" stroke="#000" stroke-width="1.2"/><path d="M5 3.2 H11 M3.2 5 V9 M7 3.2 V7" stroke="#000" stroke-width="1.2"/></svg>
<div class="t" style="left:263px;top:159px;font-size:10.7px;color:#d8203a">Schaltplan1</div>
<svg style="position:absolute;left:323px;top:159px" width="10" height="10" viewBox="0 0 10 10"><path d="M1 1 L9 9 M9 1 L1 9" stroke="#8c8c8c" stroke-width="1.8"/></svg>
<svg style="position:absolute;left:235px;top:178px" width="1429" height="794" viewBox="235 178 1429 794">
<defs>
<pattern id="dots" x="245" y="187" width="10" height="10" patternUnits="userSpaceOnUse"><rect x="0" y="0" width="1" height="1" fill="#111"/></pattern>
<linearGradient id="bodyg" x1="0" y1="0" x2="1" y2="1"><stop offset="0" stop-color="#fad383"/><stop offset="0.6" stop-color="#fddc90"/><stop offset="1" stop-color="#fbd588"/></linearGradient>
</defs>
<rect x="235" y="178" width="1429" height="794" fill="#fff"/>
<rect x="235" y="187" width="1421" height="781" fill="url(#dots)"/>
<path d="M405 276.5 H652" stroke="#000" stroke-width="1"/>
<path d="M605 286.5 H652" stroke="#000" stroke-width="1"/>
<path d="M675 286.5 H1032" stroke="#000" stroke-width="1"/>
<path d="M893 296.5 H1032" stroke="#000" stroke-width="1"/>
<path d="M1055 296.5 H1212" stroke="#000" stroke-width="1"/>
<path d="M1235 296.5 H1243" stroke="#000" stroke-width="1"/>
<path d="M445 356.5 H512" stroke="#000" stroke-width="1"/>
<path d="M485 366.5 H512" stroke="#000" stroke-width="1"/>
<path d="M535 366.5 H606" stroke="#000" stroke-width="1"/>
<path d="M755 376.5 H782" stroke="#000" stroke-width="1"/>
<path d="M805 386.5 H836" stroke="#000" stroke-width="1"/>
<path d="M575 457.5 H836" stroke="#000" stroke-width="1"/>
<path d="M485 497.5 H826" stroke="#000" stroke-width="1"/>
<path d="M673 576.5 H682" stroke="#000" stroke-width="1"/>
<path d="M705 576.5 H826" stroke="#000" stroke-width="1"/>
<path d="M575 646.5 H602" stroke="#000" stroke-width="1"/>
<path d="M405 656.5 H602" stroke="#000" stroke-width="1"/>
<path d="M625 656.5 H1042" stroke="#000" stroke-width="1"/>
<path d="M915 646.5 H1042" stroke="#000" stroke-width="1"/>
<path d="M1065 656.5 H1222" stroke="#000" stroke-width="1"/>
<path d="M1245 656.5 H1253" stroke="#000" stroke-width="1"/>
<path d="M605.5 286 V367" stroke="#000" stroke-width="1"/>
<path d="M755.5 286 V377" stroke="#000" stroke-width="1"/>
<path d="M835.5 386 V458" stroke="#000" stroke-width="1"/>
<path d="M485.5 366 V498" stroke="#000" stroke-width="1"/>
<path d="M575.5 457 V647" stroke="#000" stroke-width="1"/>
<path d="M825.5 497 V577" stroke="#000" stroke-width="1"/>
<path d="M445.5 356 V657" stroke="#000" stroke-width="1"/>
<path d="M673.5 576 V657" stroke="#000" stroke-width="1"/>
<path d="M893.5 296 V657" stroke="#000" stroke-width="1"/>
<path d="M915.5 286 V647" stroke="#000" stroke-width="1"/>
<path d="M645 296.5 H651" stroke="#000"/><rect x="645" y="297" width="1" height="1" fill="#000"/>
<path d="M505 376.5 H511" stroke="#000"/><rect x="505" y="377" width="1" height="1" fill="#000"/>
<path d="M505 386.5 H511" stroke="#000"/><rect x="505" y="387" width="1" height="1" fill="#000"/>
<path d="M775 396.5 H781" stroke="#000"/><rect x="775" y="397" width="1" height="1" fill="#000"/>
<path d="M1025 306.5 H1031" stroke="#000"/><rect x="1025" y="307" width="1" height="1" fill="#000"/>
<path d="M1025 316.5 H1031" stroke="#000"/><rect x="1025" y="317" width="1" height="1" fill="#000"/>
<path d="M595 666.5 H601" stroke="#000"/><rect x="595" y="667" width="1" height="1" fill="#000"/>
<path d="M1035 666.5 H1041" stroke="#000"/><rect x="1035" y="667" width="1" height="1" fill="#000"/>
<path d="M1035 676.5 H1041" stroke="#000"/><rect x="1035" y="677" width="1" height="1" fill="#000"/>
<rect x="381.5" y="261.5" width="24" height="34" fill="url(#bodyg)" stroke="#000"/>
<text x="392.0" y="258" text-anchor="middle" font-family="Liberation Sans" font-size="9.5" fill="#000" stroke="#000" stroke-width="0.2">I1</text>
<rect x="381.5" y="641.5" width="24" height="34" fill="url(#bodyg)" stroke="#000"/>
<text x="392.0" y="638" text-anchor="middle" font-family="Liberation Sans" font-size="9.5" fill="#000" stroke="#000" stroke-width="0.2">I2</text>
<rect x="511.5" y="351.5" width="24" height="38" fill="url(#bodyg)" stroke="#000"/>
<text x="522.0" y="348" text-anchor="middle" font-family="Liberation Sans" font-size="9.5" fill="#000" stroke="#000" stroke-width="0.2">B001</text>
<rect x="651.5" y="271.5" width="24" height="34" fill="url(#bodyg)" stroke="#000"/>
<text x="662.0" y="268" text-anchor="middle" font-family="Liberation Sans" font-size="9.5" fill="#000" stroke="#000" stroke-width="0.2">B002</text>
<rect x="601.5" y="641.5" width="24" height="34" fill="url(#bodyg)" stroke="#000"/>
<text x="612.0" y="638" text-anchor="middle" font-family="Liberation Sans" font-size="9.5" fill="#000" stroke="#000" stroke-width="0.2">B003</text>
<rect x="781.5" y="371.5" width="24" height="34" fill="url(#bodyg)" stroke="#000"/>
<text x="792.0" y="368" text-anchor="middle" font-family="Liberation Sans" font-size="9.5" fill="#000" stroke="#000" stroke-width="0.2">B004</text>
<rect x="1031.5" y="281.5" width="24" height="38" fill="url(#bodyg)" stroke="#000"/>
<text x="1042.0" y="278" text-anchor="middle" font-family="Liberation Sans" font-size="9.5" fill="#000" stroke="#000" stroke-width="0.2">B005</text>
<rect x="1041.5" y="641.5" width="24" height="38" fill="url(#bodyg)" stroke="#000"/>
<text x="1052.0" y="638" text-anchor="middle" font-family="Liberation Sans" font-size="9.5" fill="#000" stroke="#000" stroke-width="0.2">B006</text>
<rect x="681.5" y="561.5" width="24" height="34" fill="url(#bodyg)" stroke="#000"/>
<text x="692.0" y="558" text-anchor="middle" font-family="Liberation Sans" font-size="9.5" fill="#000" stroke="#000" stroke-width="0.2">M1</text>
<rect x="1211.5" y="281.5" width="24" height="34" fill="url(#bodyg)" stroke="#000"/>
<text x="1222.0" y="278" text-anchor="middle" font-family="Liberation Sans" font-size="9.5" fill="#000" stroke="#000" stroke-width="0.2">Q1</text>
<rect x="1221.5" y="641.5" width="24" height="34" fill="url(#bodyg)" stroke="#000"/>
<text x="1232.0" y="638" text-anchor="middle" font-family="Liberation Sans" font-size="9.5" fill="#000" stroke="#000" stroke-width="0.2">Q2</text>
<rect x="391" y="270" width="1" height="9" fill="#111"/>
<rect x="391" y="650" width="1" height="9" fill="#111"/>
<text x="664.5" y="285" text-anchor="middle" font-family="Liberation Sans" font-size="11" fill="#111" stroke="#111" stroke-width="0.1">RS</text>
<text x="614.5" y="655" text-anchor="middle" font-family="Liberation Sans" font-size="11" fill="#111" stroke="#111" stroke-width="0.1">RS</text>
<text x="1045.5" y="295" text-anchor="middle" font-family="Liberation Sans" font-size="11" fill="#111" stroke="#111" stroke-width="0.1">&amp;</text>
<text x="1055.5" y="655" text-anchor="middle" font-family="Liberation Sans" font-size="11" fill="#111" stroke="#111" stroke-width="0.1">&amp;</text>
<text x="694.5" y="578.5" text-anchor="middle" font-family="Liberation Sans" font-size="10.5" fill="#111" stroke="#111" stroke-width="0.1">M</text>
<text x="1224.5" y="298.5" text-anchor="middle" font-family="Liberation Sans" font-size="11.5" fill="#111" stroke="#111" stroke-width="0.1">Q</text>
<text x="1234.5" y="658.5" text-anchor="middle" font-family="Liberation Sans" font-size="11.5" fill="#111" stroke="#111" stroke-width="0.1">Q</text>
<text x="523.5" y="364" text-anchor="middle" font-family="Liberation Sans" font-size="11" fill="#111" stroke="#111" stroke-width="0.25">&gt;1</text>
<path d="M517 368.5 H524" stroke="#111"/>
<path d="M784 383.5 H787.5 V375.5 H800.5 V383.5 H803 M784 394.5 H797.5 V387.5 H799.5 V394.5 H803" fill="none" stroke="#111" stroke-width="1"/><path d="M787.5 385 V394" stroke="#111" stroke-dasharray="2 2"/>
<rect x="789.5" y="409.5" width="8" height="8" fill="#f4f4f4" stroke="#8c8c8c"/><path d="M791 413.5 H796 M793.5 411 V416" stroke="#2a3a6a"/>
<text x="597" y="307" font-family="Liberation Sans" font-size="9.5" fill="#2f5f2f" stroke="#2f5f2f" stroke-width="0.15" letter-spacing="0.6">Rem = off</text>
<text x="546" y="677" font-family="Liberation Sans" font-size="9.5" fill="#2f5f2f" stroke="#2f5f2f" stroke-width="0.15" letter-spacing="0.6">Rem = off</text>
<text x="781" y="431" font-family="Liberation Sans" font-size="9.5" fill="#2f5f2f" stroke="#2f5f2f" stroke-width="0.15" letter-spacing="0.6">Rem = off</text>
<text x="781" y="445" font-family="Liberation Sans" font-size="9.5" fill="#2f5f2f" stroke="#2f5f2f" stroke-width="0.15">05:00s+</text>
<circle cx="606.5" cy="327.5" r="5" fill="#0d0df2" stroke="#000038"/>
<circle cx="756.5" cy="332.5" r="5" fill="#0d0df2" stroke="#000038"/>
<circle cx="836.5" cy="422.5" r="5" fill="#0d0df2" stroke="#000038"/>
<circle cx="486.5" cy="432.5" r="5" fill="#0d0df2" stroke="#000038"/>
<circle cx="576.5" cy="552.5" r="5" fill="#0d0df2" stroke="#000038"/>
<circle cx="826.5" cy="537.5" r="5" fill="#0d0df2" stroke="#000038"/>
<circle cx="674.5" cy="617.5" r="5" fill="#0d0df2" stroke="#000038"/>
<circle cx="706.5" cy="458.5" r="5" fill="#0d0df2" stroke="#000038"/>
<circle cx="656.5" cy="498.5" r="5" fill="#0d0df2" stroke="#000038"/>
<circle cx="706.5" cy="656.5" r="5" fill="#0d0df2" stroke="#000038"/>
<circle cx="894.5" cy="477.5" r="5" fill="#0d0df2" stroke="#000038"/>
<circle cx="916.5" cy="467.5" r="5" fill="#0d0df2" stroke="#000038"/>
<circle cx="756.5" cy="288.5" r="5" fill="#0d0df2" stroke="#000038"/>
<rect x="601.5" y="282.5" width="8" height="8" fill="#ee1111" stroke="#3a0000"/>
<rect x="601.5" y="362.5" width="8" height="8" fill="#ee1111" stroke="#3a0000"/>
<rect x="751.5" y="282.5" width="8" height="8" fill="#ee1111" stroke="#3a0000"/>
<rect x="751.5" y="372.5" width="8" height="8" fill="#ee1111" stroke="#3a0000"/>
<rect x="831.5" y="382.5" width="8" height="8" fill="#ee1111" stroke="#3a0000"/>
<rect x="831.5" y="453.5" width="8" height="8" fill="#ee1111" stroke="#3a0000"/>
<rect x="571.5" y="453.5" width="8" height="8" fill="#ee1111" stroke="#3a0000"/>
<rect x="481.5" y="362.5" width="8" height="8" fill="#ee1111" stroke="#3a0000"/>
<rect x="481.5" y="493.5" width="8" height="8" fill="#ee1111" stroke="#3a0000"/>
<rect x="821.5" y="493.5" width="8" height="8" fill="#ee1111" stroke="#3a0000"/>
<rect x="821.5" y="572.5" width="8" height="8" fill="#ee1111" stroke="#3a0000"/>
<rect x="571.5" y="642.5" width="8" height="8" fill="#ee1111" stroke="#3a0000"/>
<rect x="669.5" y="652.5" width="8" height="8" fill="#ee1111" stroke="#3a0000"/>
<rect x="889.5" y="292.5" width="8" height="8" fill="#ee1111" stroke="#3a0000"/>
<rect x="911.5" y="282.5" width="8" height="8" fill="#ee1111" stroke="#3a0000"/>
<rect x="889.5" y="652.5" width="8" height="8" fill="#ee1111" stroke="#3a0000"/>
<rect x="911.5" y="642.5" width="8" height="8" fill="#ee1111" stroke="#3a0000"/>
<rect x="669.5" y="572.5" width="8" height="8" fill="#ee1111" stroke="#3a0000"/>
<rect x="641.5" y="282.5" width="8" height="8" fill="#0d0df2" stroke="#000038"/>
<rect x="678.5" y="282.5" width="8" height="8" fill="#0d0df2" stroke="#000038"/>
<rect x="501.5" y="362.5" width="8" height="8" fill="#0d0df2" stroke="#000038"/>
<rect x="538.5" y="362.5" width="8" height="8" fill="#0d0df2" stroke="#000038"/>
<rect x="771.5" y="372.5" width="8" height="8" fill="#0d0df2" stroke="#000038"/>
<rect x="808.5" y="382.5" width="8" height="8" fill="#0d0df2" stroke="#000038"/>
<rect x="1021.5" y="282.5" width="8" height="8" fill="#0d0df2" stroke="#000038"/>
<rect x="1021.5" y="292.5" width="8" height="8" fill="#0d0df2" stroke="#000038"/>
<rect x="1031.5" y="642.5" width="8" height="8" fill="#0d0df2" stroke="#000038"/>
<rect x="1031.5" y="652.5" width="8" height="8" fill="#0d0df2" stroke="#000038"/>
<rect x="591.5" y="642.5" width="8" height="8" fill="#0d0df2" stroke="#000038"/>
<rect x="628.5" y="652.5" width="8" height="8" fill="#0d0df2" stroke="#000038"/>
<rect x="671.5" y="572.5" width="8" height="8" fill="#0d0df2" stroke="#000038"/>
<rect x="708.5" y="572.5" width="8" height="8" fill="#0d0df2" stroke="#000038"/>
<rect x="507.5" y="347.5" width="8" height="8" fill="#ee1111" stroke="#3a0000"/><rect x="531.5" y="347.5" width="8" height="8" fill="#ee1111" stroke="#3a0000"/><rect x="507.5" y="385.5" width="8" height="8" fill="#ee1111" stroke="#3a0000"/><rect x="531.5" y="385.5" width="8" height="8" fill="#ee1111" stroke="#3a0000"/>
<rect x="647.5" y="267.5" width="8" height="8" fill="#ee1111" stroke="#3a0000"/><rect x="671.5" y="267.5" width="8" height="8" fill="#ee1111" stroke="#3a0000"/><rect x="647.5" y="301.5" width="8" height="8" fill="#ee1111" stroke="#3a0000"/><rect x="671.5" y="301.5" width="8" height="8" fill="#ee1111" stroke="#3a0000"/>
<rect x="597.5" y="637.5" width="8" height="8" fill="#ee1111" stroke="#3a0000"/><rect x="621.5" y="637.5" width="8" height="8" fill="#ee1111" stroke="#3a0000"/><rect x="597.5" y="671.5" width="8" height="8" fill="#ee1111" stroke="#3a0000"/><rect x="621.5" y="671.5" width="8" height="8" fill="#ee1111" stroke="#3a0000"/>
<rect x="777.5" y="367.5" width="8" height="8" fill="#ee1111" stroke="#3a0000"/><rect x="801.5" y="367.5" width="8" height="8" fill="#ee1111" stroke="#3a0000"/><rect x="777.5" y="401.5" width="8" height="8" fill="#ee1111" stroke="#3a0000"/><rect x="801.5" y="401.5" width="8" height="8" fill="#ee1111" stroke="#3a0000"/>
<rect x="1027.5" y="277.5" width="8" height="8" fill="#ee1111" stroke="#3a0000"/><rect x="1051.5" y="277.5" width="8" height="8" fill="#ee1111" stroke="#3a0000"/><rect x="1027.5" y="315.5" width="8" height="8" fill="#ee1111" stroke="#3a0000"/><rect x="1051.5" y="315.5" width="8" height="8" fill="#ee1111" stroke="#3a0000"/>
<rect x="1037.5" y="637.5" width="8" height="8" fill="#ee1111" stroke="#3a0000"/><rect x="1061.5" y="637.5" width="8" height="8" fill="#ee1111" stroke="#3a0000"/><rect x="1037.5" y="675.5" width="8" height="8" fill="#ee1111" stroke="#3a0000"/><rect x="1061.5" y="675.5" width="8" height="8" fill="#ee1111" stroke="#3a0000"/>
<rect x="677.5" y="557.5" width="8" height="8" fill="#ee1111" stroke="#3a0000"/><rect x="701.5" y="557.5" width="8" height="8" fill="#ee1111" stroke="#3a0000"/><rect x="677.5" y="591.5" width="8" height="8" fill="#ee1111" stroke="#3a0000"/><rect x="701.5" y="591.5" width="8" height="8" fill="#ee1111" stroke="#3a0000"/>
<circle cx="445.5" cy="656.5" r="3.5" fill="#000"/>
</svg>
<div style="position:absolute;left:1663px;top:178px;width:17px;height:795px;background:#f0f0f0"></div>
<svg style="position:absolute;left:1664px;top:179px" width="15" height="14" viewBox="0 0 15 14">
<rect x="0.5" y="0.5" width="14" height="13" fill="#f0f0f0" stroke="#a8a8a8"/>
<path d="M4.5 8.5 L7.5 5.5 L10.5 8.5" fill="none" stroke="#000" stroke-width="2.6" stroke-linecap="round" stroke-linejoin="round"/>
</svg>
<svg style="position:absolute;left:1664px;top:195px" width="15" height="596"><rect x="0.5" y="0.5" width="14" height="595" fill="#f0f0f0" stroke="#a8a8a8"/><path d="M4 293.5 H11 M4 295.5 H11 M4 297.5 H11 M4 299.5 H11" stroke="#c4c4c4"/></svg>
<svg style="position:absolute;left:1664px;top:957px" width="15" height="14" viewBox="0 0 15 14">
<rect x="0.5" y="0.5" width="14" height="13" fill="#f0f0f0" stroke="#a8a8a8"/>
<path d="M4.5 5.5 L7.5 8.5 L10.5 5.5" fill="none" stroke="#000" stroke-width="2.6" stroke-linecap="round" stroke-linejoin="round"/>
</svg>
<div style="position:absolute;left:235px;top:972px;width:1445px;height:17px;background:#f0f0f0"></div>
<svg style="position:absolute;left:236px;top:973px" width="14" height="15" viewBox="0 0 14 15">
<rect x="0.5" y="0.5" width="13" height="14" fill="#f0f0f0" stroke="#a8a8a8"/>
<path d="M8.5 4.5 L5.5 7.5 L8.5 10.5" fill="none" stroke="#000" stroke-width="2.6" stroke-linecap="round" stroke-linejoin="round"/>
</svg>
<svg style="position:absolute;left:252px;top:973px" width="1270" height="16"><rect x="0.5" y="0.5" width="1269" height="15" fill="#f0f0f0" stroke="#a8a8a8"/><path d="M631.5 4 V12 M633.5 4 V12 M635.5 4 V12 M637.5 4 V12" stroke="#c4c4c4"/></svg>
<svg style="position:absolute;left:1648px;top:973px" width="14" height="15" viewBox="0 0 14 15">
<rect x="0.5" y="0.5" width="13" height="14" fill="#f0f0f0" stroke="#a8a8a8"/>
<path d="M5.5 4.5 L8.5 7.5 L5.5 10.5" fill="none" stroke="#000" stroke-width="2.6" stroke-linecap="round" stroke-linejoin="round"/>
</svg>
<div style="position:absolute;left:0;top:989px;width:1680px;height:1px;background:#a8a8a8"></div>
<div style="position:absolute;left:0;top:990px;width:1680px;height:19px;background:#e0e0e0"></div>
<div class="t" style="left:3px;top:995px;font-size:10.4px;color:#111">Selektion</div>
<div style="position:absolute;left:1511px;top:990px;width:1px;height:19px;background:#b4b4b4"></div>
<div style="position:absolute;left:1512px;top:990px;width:1px;height:19px;background:#f4f4f4"></div>
<div style="position:absolute;left:1595px;top:990px;width:1px;height:19px;background:#b4b4b4"></div>
<div style="position:absolute;left:1596px;top:990px;width:1px;height:19px;background:#f4f4f4"></div>
<div style="position:absolute;left:1641px;top:990px;width:1px;height:19px;background:#b4b4b4"></div>
<div style="position:absolute;left:1642px;top:990px;width:1px;height:19px;background:#f4f4f4"></div>
<svg style="position:absolute;left:1514px;top:991px" width="13" height="16"><rect x="0" y="0" width="12" height="15" fill="#4c5a7a"/><rect x="0" y="0" width="12" height="3" fill="#8a94b0"/><rect x="2" y="4" width="6" height="6" fill="#f4901a" stroke="#222" stroke-width="0.8"/></svg>
<div class="t" style="left:1531px;top:994px;font-size:10.4px;color:#111">LOGO! 8.FS4</div>
<div class="t" style="left:1600px;top:994px;font-size:10.4px;color:#111">100%</div>
<div class="t" style="left:1644px;top:994px;font-size:10.4px;color:#111">S. 1-1</div>
<div style="position:absolute;left:0;top:1009px;width:1680px;height:3px;background:#0a0a0a"></div>
<div style="position:absolute;left:441px;top:1009px;width:48px;height:3px;background:#3a3a3a"></div>
</div></body></html>
